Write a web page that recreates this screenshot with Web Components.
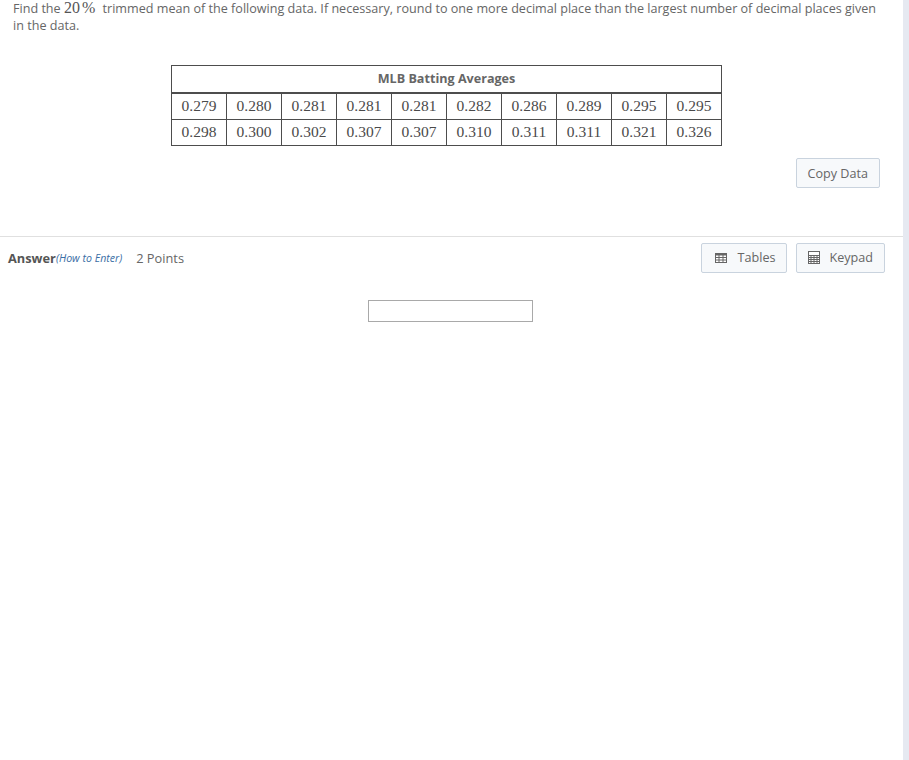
<!DOCTYPE html>
<html>
<head>
<meta charset="utf-8" />
<title>Trimmed mean question</title>
<style>
    html, body { margin: 0; height: 100%; background: #fff; }
    body { font-family: "Open Sans", "Liberation Sans", sans-serif; overflow: hidden; }
</style>
</head>
<body>
<x-page>
    <x-question>Find the <x-math>20 %</x-math> trimmed mean of the following data. If necessary, round to one more decimal place than the largest number of decimal places given<br>in the data.</x-question>
    <x-data-table title="MLB Batting Averages"
        values="0.279 0.280 0.281 0.281 0.281 0.282 0.286 0.289 0.295 0.295 0.298 0.300 0.302 0.307 0.307 0.310 0.311 0.311 0.321 0.326"></x-data-table>
    <x-copy-row><x-button>Copy Data</x-button></x-copy-row>
    <x-answer-bar>
        <x-button slot="tools" icon="tables">Tables</x-button>
        <x-button slot="tools" icon="keypad">Keypad</x-button>
    </x-answer-bar>
    <x-answer-box></x-answer-box>
</x-page>

<script>
customElements.define('x-page', class extends HTMLElement {
    constructor () {
        super();
        this.attachShadow({mode: 'open'});
        this.shadowRoot.innerHTML = `
            <style>
                :host {
                    display: block;
                    box-sizing: border-box;
                    width: 909px;
                    height: 760px;
                    border-right: 6px solid #e6e9f1;
                    color: #666;
                }
            </style>
            <slot></slot>`;
    }
});

customElements.define('x-question', class extends HTMLElement {
    constructor () {
        super();
        this.attachShadow({mode: 'open'});
        this.shadowRoot.innerHTML = `
            <style>
                :host {
                    display: block;
                    padding: 0 0 0 13px;
                    font-size: 12.6px;
                    line-height: 17px;
                    white-space: nowrap;
                    height: 65px;
                }
            </style>
            <slot></slot>`;
    }
});

customElements.define('x-math', class extends HTMLElement {
    constructor () {
        super();
        this.attachShadow({mode: 'open'});
        this.shadowRoot.innerHTML = `
            <style>
                :host {
                    display: inline;
                    font-family: "Liberation Serif", "Times New Roman", serif;
                    font-size: 16px;
                    line-height: 1;
                    word-spacing: -2px;
                    margin-right: 4px;
                    color: #555;
                }
            </style>
            <slot></slot>`;
    }
});

customElements.define('x-data-table', class extends HTMLElement {
    connectedCallback () {
        const values = this.getAttribute('values').split(' ');
        const cells = values.map(v => `<td>${v}</td>`);
        let rows = '';
        for (let i = 0; i < cells.length; i += 10) {
            rows += `<tr>${cells.slice(i, i + 10).join('')}</tr>`;
        }
        this.attachShadow({mode: 'open'});
        this.shadowRoot.innerHTML = `
            <style>
                :host { display: flex; justify-content: center; padding-right: 10px; }
                table {
                    border-collapse: collapse;
                    table-layout: fixed;
                    width: 551px;
                    color: #4a4a4a;
                }
                th {
                    height: 24px;
                    padding: 0 0 2px;
                    font-size: 12.6px;
                    font-weight: 700;
                    color: #666;
                    border: 1px solid #4d4d4d;
                    border-bottom: 2px solid #4d4d4d;
                }
                td {
                    height: 23px;
                    padding: 0 0 2px;
                    text-align: center;
                    font-family: "Liberation Serif", "Times New Roman", serif;
                    font-size: 15.5px;
                    border: 1px solid #4d4d4d;
                }
            </style>
            <table>
                <thead><tr><th colspan="10">${this.getAttribute('title')}</th></tr></thead>
                <tbody>${rows}</tbody>
            </table>`;
    }
});

customElements.define('x-copy-row', class extends HTMLElement {
    constructor () {
        super();
        this.attachShadow({mode: 'open'});
        this.shadowRoot.innerHTML = `
            <style>
                :host {
                    display: flex;
                    justify-content: flex-end;
                    padding: 12px 23px 0 0;
                    height: 78px;
                }
            </style>
            <slot></slot>`;
    }
});

const ICONS = {
    tables: `<svg width="12" height="10" viewBox="0 0 12 10" fill="none" stroke="#666" stroke-width="1">
        <rect x=".5" y=".5" width="11" height="9" fill="#fff"/>
        <path d="M0 1.500h12" stroke-width="2"/>
        <path d="M0 4.500h12M0 7h12M4 0v10M8 0v10"/></svg>`,
    keypad: `<svg width="12" height="13" viewBox="0 0 12 13" fill="none" stroke="#666" stroke-width="1">
        <rect x=".5" y=".5" width="11" height="12" fill="#fff"/>
        <path d="M0 4.500h12M0 6.500h12M0 8.500h12M0 10.500h12M3 5v8M6 5v8M9 5v8"/></svg>`
};

// left padding, gap to the text and right padding for each kind of button
const BUTTON_SPACING = {
    tables: [13, 11, 11],
    keypad: [11, 9, 11]
};

customElements.define('x-button', class extends HTMLElement {
    connectedCallback () {
        const kind = this.getAttribute('icon');
        const icon = ICONS[kind] || '';
        const [left, gap, right] = BUTTON_SPACING[kind] || [11, 0, 11];
        this.attachShadow({mode: 'open'});
        this.shadowRoot.innerHTML = `
            <style>
                :host {
                    display: inline-flex;
                    align-items: center;
                    box-sizing: border-box;
                    height: 30px;
                    padding: 0 ${right}px 0 ${left}px;
                    gap: ${gap}px;
                    font-size: 12.6px;
                    color: #666;
                    background: #f7f9fb;
                    border: 1px solid #c9d3de;
                    border-radius: 2px;
                }
                svg { display: block; }
            </style>
            ${icon}<slot></slot>`;
    }
});

customElements.define('x-answer-bar', class extends HTMLElement {
    constructor () {
        super();
        this.attachShadow({mode: 'open'});
        this.shadowRoot.innerHTML = `
            <style>
                :host {
                    display: flex;
                    align-items: center;
                    box-sizing: border-box;
                    height: 44px;
                    margin-bottom: 20px;
                    padding: 0 18px 2px 8px;
                    border-top: 1px solid #e0e0e0;
                    font-size: 12.8px;
                }
                b { font-weight: 700; color: #555; }
                a { font-size: 10.6px; font-style: italic; color: #3a6ea5; }
                .points { margin-left: 14px; }
                .tools { margin-left: auto; display: flex; gap: 9px; }
            </style>
            <b>Answer</b><a>(How to Enter)</a><span class="points">2 Points</span>
            <div class="tools"><slot name="tools"></slot></div>`;
    }
});

customElements.define('x-answer-box', class extends HTMLElement {
    constructor () {
        super();
        this.attachShadow({mode: 'open'});
        this.shadowRoot.innerHTML = `
            <style>
                :host { display: block; padding-left: 368px; }
                input {
                    display: block;
                    box-sizing: border-box;
                    width: 165px;
                    height: 22px;
                    margin: 0;
                    border: 1px solid #a9a9a9;
                    background: #fff;
                    outline: none;
                }
            </style>
            <input type="text">`;
    }
});
</script>
</body>
</html>
